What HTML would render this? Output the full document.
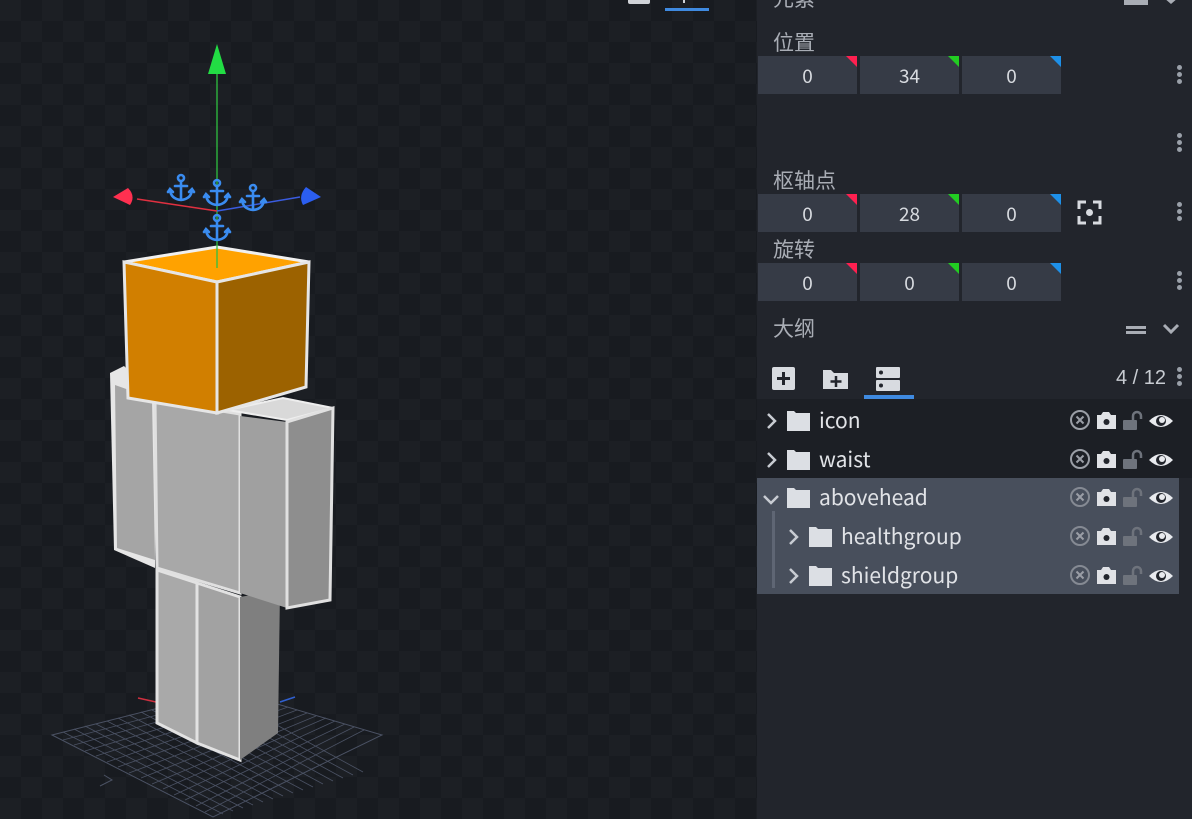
<!DOCTYPE html>
<html><head><meta charset="utf-8"><style>
*{margin:0;padding:0;box-sizing:border-box}
body{width:1192px;height:819px;overflow:hidden;background:#1b1e23;font-family:"Liberation Sans","Noto Sans CJK SC",sans-serif;position:relative}
#vp{position:absolute;left:0;top:0;width:757px;height:819px;
background-color:#1c1f24;
background-image:linear-gradient(45deg,#181b20 25%,transparent 25%,transparent 75%,#181b20 75%),linear-gradient(45deg,#181b20 25%,transparent 25%,transparent 75%,#181b20 75%);
background-size:42px 42px;background-position:0 0,21px 21px}
#pn{position:absolute;left:757px;top:0;width:435px;height:819px;background:#22252c}
.lbl{position:absolute;left:16px;color:#a9adb5;font-size:21px;font-family:"Noto Sans CJK SC",sans-serif;line-height:1}
.in{position:absolute;width:99px;height:38px;background:#363b46;color:#d8dbe0;font-size:19px;text-align:center;line-height:40px;font-family:"Noto Sans CJK SC","Liberation Sans",sans-serif}
.in:after{content:"";position:absolute;right:0;top:0;border-style:solid;border-width:0 11px 11px 0;border-color:transparent var(--c) transparent transparent}
.dots{position:absolute;left:420px;width:5px}
.dots i{display:block;width:5px;height:5px;border-radius:50%;background:#9aa0a9;margin-bottom:2px}
.row{position:absolute;left:0;width:422px;height:39px;color:#e1e3e7;font-size:21px;font-family:"Noto Sans CJK SC",sans-serif}
.row span{position:absolute;top:4px}
.ic{position:absolute;top:0}
</style></head><body>
<div id="vp">
<svg width="757" height="819" style="position:absolute;left:0;top:0">
<defs>
<g id="anc" fill="none" stroke="#3a8cf0" stroke-width="2.6" stroke-linecap="round">
<circle cx="0" cy="-10" r="3"/><line x1="0" y1="-7" x2="0" y2="11"/><line x1="-6" y1="-2" x2="6" y2="-2"/>
<path d="M-11,2Q-10,11 0,12Q10,11 11,2"/><path d="M-13,4L-11,1L-8,4M8,4L11,1L13,4"/>
</g>
</defs>
<rect x="628" y="-4" width="22" height="8" rx="2" fill="#d0d3d8"/>
<rect x="665" y="8" width="44" height="3" fill="#3f8ae0"/>
<rect x="683" y="-2" width="2" height="5" fill="#d0d3d8"/>
<g stroke="#4b5264" stroke-width="1" fill="none">
<polygon points="52,735 230,690 382,735 213,817"/>
</g>
<g stroke="#4b5264" stroke-width="0.8">
<line x1="63" y1="732" x2="223" y2="814"/><line x1="74" y1="729" x2="233" y2="811"/><line x1="85" y1="726" x2="243" y2="808"/><line x1="96" y1="724" x2="253" y2="805"/><line x1="107" y1="721" x2="263" y2="802"/><line x1="118" y1="718" x2="273" y2="799"/><line x1="129" y1="715" x2="283" y2="796"/><line x1="141" y1="712" x2="293" y2="793"/><line x1="152" y1="710" x2="303" y2="790"/><line x1="163" y1="707" x2="313" y2="787"/><line x1="174" y1="704" x2="323" y2="784"/><line x1="185" y1="701" x2="333" y2="781"/><line x1="196" y1="698" x2="343" y2="778"/><line x1="207" y1="696" x2="353" y2="775"/><line x1="218" y1="693" x2="363" y2="772"/>
<line x1="63" y1="740" x2="240" y2="693"/><line x1="74" y1="745" x2="250" y2="696"/><line x1="85" y1="751" x2="259" y2="699"/><line x1="96" y1="756" x2="269" y2="701"/><line x1="107" y1="762" x2="278" y2="704"/><line x1="118" y1="767" x2="288" y2="707"/><line x1="129" y1="773" x2="297" y2="710"/><line x1="141" y1="778" x2="307" y2="713"/><line x1="152" y1="784" x2="316" y2="716"/><line x1="163" y1="789" x2="326" y2="718"/><line x1="174" y1="795" x2="335" y2="721"/><line x1="185" y1="800" x2="345" y2="724"/><line x1="196" y1="806" x2="354" y2="727"/><line x1="205" y1="812" x2="364" y2="730"/>
</g>
<line x1="138" y1="698" x2="156" y2="702" stroke="#d03040" stroke-width="1.5"/>
<line x1="280" y1="702" x2="295" y2="697" stroke="#3060d0" stroke-width="1.5"/>
<path d="M100,786L112,780L104,775" stroke="#4b5264" fill="none"/>
<polygon points="157,570 197,583 197,743 157,723" fill="#a9a9a9" stroke="#e2e2e2" stroke-width="3"/>
<polygon points="197,583 240,597 240,760 197,743" fill="#a2a2a2" stroke="#e2e2e2" stroke-width="3"/>
<polygon points="240,597 280,590 278,733 240,760" fill="#7f7f7f"/>
<polygon points="110,373 124,366 157,400 155,568 114,550" fill="#e6e6e6"/>
<polygon points="115,385 152,398 155,560 117,548" fill="#a5a5a5"/>
<polygon points="155,400 240,414 240,593 157,568" fill="#a8a8a8" stroke="#e0e0e0" stroke-width="3"/>
<polygon points="228,410 283,398 333,408 287,420" fill="#d9d9d9" stroke="#eee" stroke-width="2"/>
<polygon points="240,416 287,422 287,608 240,593" fill="#a0a0a0"/>
<polygon points="287,422 333,408 330,600 287,608" fill="#8e8e8e" stroke="#e0e0e0" stroke-width="3"/>
<polygon points="124,262 217,247 309,262 217,282" fill="#ffa200" stroke="#f0f0f0" stroke-width="3"/>
<polygon points="124,262 217,282 217,413 128,398" fill="#d17f00" stroke="#e6e6e6" stroke-width="3"/>
<polygon points="217,282 309,262 306,387 217,413" fill="#9c6200" stroke="#e6e6e6" stroke-width="3"/>
<line x1="217" y1="70" x2="217" y2="268" stroke="#2fc040" stroke-width="1.3"/>
<polygon points="217,44 208,74 226,74" fill="#22dd44"/>
<line x1="137" y1="199" x2="217" y2="211" stroke="#e03040" stroke-width="1.5"/>
<line x1="217" y1="211" x2="300" y2="197" stroke="#3a5ce0" stroke-width="1.5"/>
<path d="M113,197 L128,188 Q136,196 130,205 Z" fill="#ff3050"/>
<path d="M321,197 L306,187 Q298,196 303,205 Z" fill="#2b5ef0"/>
<use href="#anc" x="181" y="188"/><use href="#anc" x="217" y="193"/><use href="#anc" x="253" y="198"/><use href="#anc" x="217" y="228"/>
</svg>
</div>
<div id="pn">
<div class="lbl" style="top:-12px">元素</div>
<div style="position:absolute;left:367px;top:0;width:24px;height:5px;background:#a9adb5"></div>
<svg style="position:absolute;left:405px;top:-4px" width="18" height="10"><path d="M2,0L9,6L16,0" stroke="#a9adb5" stroke-width="3" fill="none"/></svg>
<div class="lbl" style="top:32px">位置</div>
<div class="in" style="left:1px;top:56px;--c:#ff2050">0</div>
<div class="in" style="left:103px;top:56px;--c:#22cc22">34</div>
<div class="in" style="left:205px;top:56px;--c:#1e90e8">0</div>
<div class="dots" style="top:65px"><i></i><i></i><i></i></div>
<div class="dots" style="top:133px"><i></i><i></i><i></i></div>
<div class="lbl" style="top:170px">枢轴点</div>
<div class="in" style="left:1px;top:194px;--c:#ff2050">0</div>
<div class="in" style="left:103px;top:194px;--c:#22cc22">28</div>
<div class="in" style="left:205px;top:194px;--c:#1e90e8">0</div>
<svg style="position:absolute;left:320px;top:200px" width="25" height="25"><path d="M2,9V2H9M16,2H23V9M23,16V23H16M9,23H2V16" stroke="#d8dbe0" stroke-width="3" fill="none"/><circle cx="12.5" cy="12.5" r="3.5" fill="#d8dbe0"/></svg>
<div class="dots" style="top:202px"><i></i><i></i><i></i></div>
<div class="lbl" style="top:239px">旋转</div>
<div class="in" style="left:1px;top:263px;--c:#ff2050">0</div>
<div class="in" style="left:103px;top:263px;--c:#22cc22">0</div>
<div class="in" style="left:205px;top:263px;--c:#1e90e8">0</div>
<div class="dots" style="top:271px"><i></i><i></i><i></i></div>
<div class="lbl" style="top:318px">大纲</div>
<div style="position:absolute;left:369px;top:326px;width:20px;height:3px;background:#a9adb5;box-shadow:0 5px 0 #a9adb5"></div>
<svg style="position:absolute;left:405px;top:322px" width="18" height="14"><path d="M2,3L9,10L16,3" stroke="#a9adb5" stroke-width="3" fill="none"/></svg>
<svg style="position:absolute;left:14px;top:366px" width="132" height="26">
<rect x="1" y="1" width="23" height="23" rx="2" fill="#d8dbe0"/><path d="M12.5,6V19M6,12.5H19" stroke="#22252c" stroke-width="3"/>
<path d="M52,4H60L63,7H77V23H52Z" fill="#d8dbe0"/><path d="M65,10V21M59.5,15.5H70.5" stroke="#22252c" stroke-width="2.5"/>
<rect x="105" y="1" width="24" height="11" rx="1" fill="#d8dbe0"/><rect x="105" y="14" width="24" height="11" rx="1" fill="#d8dbe0"/><circle cx="110" cy="6.5" r="2" fill="#22252c"/><circle cx="110" cy="19.5" r="2" fill="#22252c"/>
</svg>
<div style="position:absolute;left:107px;top:395px;width:50px;height:4px;background:#3f8ae0"></div>
<div style="position:absolute;left:359px;top:367px;color:#c8ccd2;font-size:20px">4 / 12</div>
<div class="dots" style="top:367px"><i></i><i></i><i></i></div>
<div style="position:absolute;left:0;top:399px;width:435px;height:79px;background:#1c1f25"></div>
<div style="position:absolute;left:0;top:478px;width:422px;height:116px;background:#484f5c"></div>
<div style="position:absolute;left:15px;top:511px;width:3px;height:77px;background:#5f6674"></div>
<div id="rows"></div>
</div>
<script>
var rows=[["icon",401,0],["waist",440,0],["abovehead",478,0],["healthgroup",517,1],["shieldgroup",556,1]];
var h="";
rows.forEach(function(r,i){
 var ind=r[2]*22, op=(i>=2)?0.75:1;
 var chev=(i==2)?'<path d="M4,10L11,17L18,10" stroke="#c8ccd2" stroke-width="2.5" fill="none"/>':'<path d="M8,5L15,12L8,19" stroke="#c8ccd2" stroke-width="2.5" fill="none"/>';
 h+='<div class="row" style="top:'+r[1]+'px">'+
 '<svg class="ic" style="left:'+(3+ind)+'px;top:8px" width="50" height="24">'+chev+'<path d="M27,2H34L36,4H50V22H27Z" fill="#dcdfe4"/></svg>'+
 '<span style="left:'+(62+ind)+'px">'+r[0]+'</span>'+
 '<svg class="ic" style="left:312px;top:8px" width="110" height="24">'+
 '<circle cx="11" cy="11" r="9" stroke="#9a9ea6" stroke-width="2" fill="none" opacity="'+op+'"/><path d="M7.5,7.5L14.5,14.5M14.5,7.5L7.5,14.5" stroke="#9a9ea6" stroke-width="2"/>'+
 '<path d="M28,6H32L34,3H40L42,6H47V20H28Z" fill="#e0e2e6"/><circle cx="37.5" cy="13" r="3" fill="#22252c"/>'+
 '<rect x="54" y="11" width="14" height="10" rx="1" fill="#6e737c"/><path d="M64,11V7A4,4 0 0 1 72,7V10" stroke="#6e737c" stroke-width="2.5" fill="none"/>'+
 '<path d="M80,12Q92,0 104,12Q92,24 80,12Z" fill="#e8eaee"/><circle cx="92" cy="12" r="5" fill="#22252c"/><circle cx="93" cy="11" r="3" fill="#e8eaee"/>'+
 '</svg></div>';
});
document.getElementById("rows").innerHTML=h;
</script>
</body></html>
